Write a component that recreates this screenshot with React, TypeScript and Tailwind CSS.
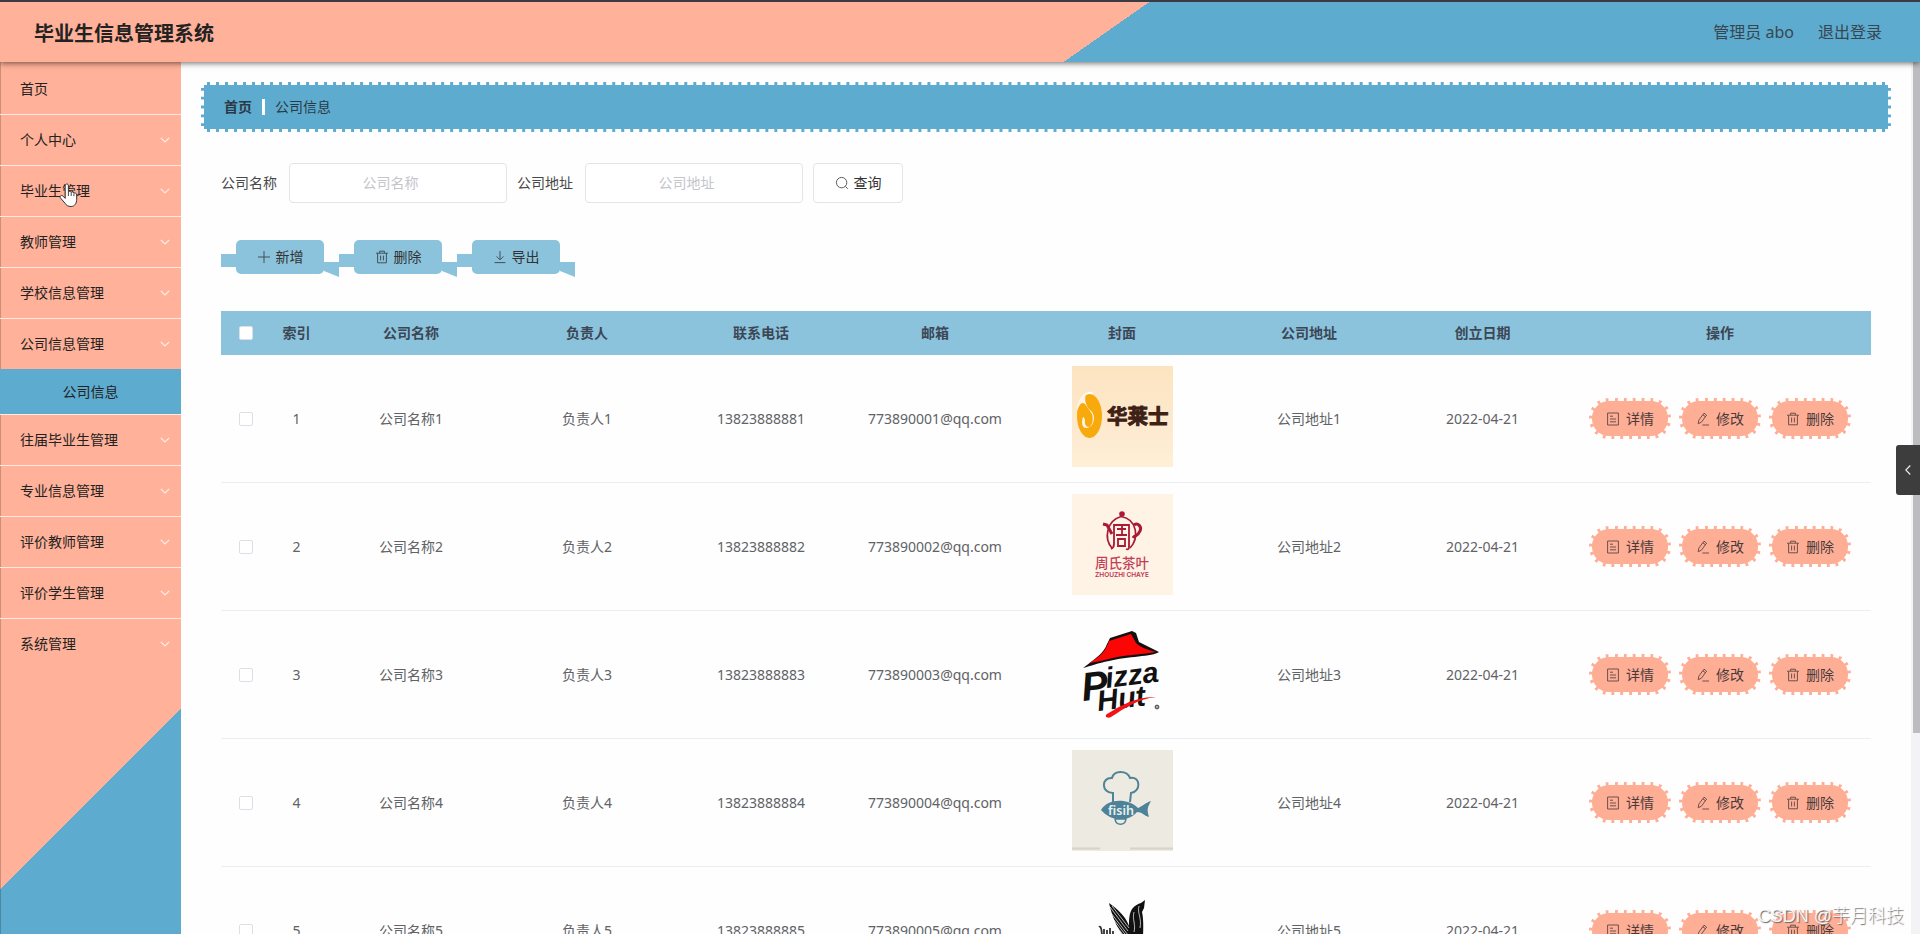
import React from "react";

type IconName = "plus" | "trash" | "download" | "search" | "doc" | "edit";

const iconPaths: Record<IconName, React.ReactNode> = {
  plus: <path d="M7 1v12M1 7h12" />,
  trash: <path d="M1 3.2h12M4.6 3V1.2h4.8V3M2.6 3.4v9.4h8.8V3.4M5.6 5.6v4.8M8.4 5.6v4.8" />,
  download: <path d="M7 1v8.6M3.6 6.4 7 9.8l3.4-3.4M1.6 12.6h10.8" />,
  search: (
    <>
      <circle cx="6.6" cy="6.6" r="5.2" />
      <path d="m10.4 10.4 2.4 2.4" />
    </>
  ),
  doc: <path d="M1.6 1h10.8v12H1.6zM4 4.2h3M4 7h6M4 9.8h6" />,
  edit: <path d="M6.4 13H13M2.2 11.8l.6-3.6L8 1.2l2.6 1.9-5.2 7.1zM6.8 2.8l2.6 1.9" />,
};

function Icon({ name }: { name: IconName }) {
  return (
    <svg viewBox="0 0 14 14" className="h-[14px] w-[14px] shrink-0" fill="none" stroke="currentColor" strokeWidth="1" opacity="0.8" aria-hidden="true">
      {iconPaths[name]}
    </svg>
  );
}

const menu: { label: string; child?: string; plain?: boolean }[] = [
  { label: "首页", plain: true },
  { label: "个人中心" },
  { label: "毕业生管理" },
  { label: "教师管理" },
  { label: "学校信息管理" },
  { label: "公司信息管理", child: "公司信息" },
  { label: "往届毕业生管理" },
  { label: "专业信息管理" },
  { label: "评价教师管理" },
  { label: "评价学生管理" },
  { label: "系统管理" },
];

function Sidebar() {
  return (
    <nav className="relative w-[181px] shrink-0 bg-[linear-gradient(135deg,#ffb199_78.6%,#5eabd0_78.6%)] pt-[2px] text-[14px] text-[#222] shadow-[inset_1px_0_0_rgba(0,0,0,0.2)]">
      <ul>
        {menu.map((item, i) => (
          <li key={item.label} className={i < menu.length - 1 ? "border-b border-[#ffe9e1]" : ""}>
            <button type="button" className="flex h-[50px] w-full items-center justify-between pl-5 pr-[11px]">
              <span>{item.label}</span>
              {!item.plain && (
                <svg viewBox="0 0 10 6" className="h-[6px] w-[10px]" fill="none" stroke="#ffeee8" strokeWidth="1.2" aria-hidden="true">
                  <path d="m.8.8 4.2 4.2L9.2.8" />
                </svg>
              )}
            </button>
            {item.child && (
              <a href="#company" className="flex h-[45px] items-center justify-center bg-[#5eabd0]">
                {item.child}
              </a>
            )}
          </li>
        ))}
      </ul>
      <svg viewBox="0 0 20 25" className="pointer-events-none absolute left-[59px] top-[121px] h-[25px] w-[20px]" aria-hidden="true">
        <path
          d="M6.2 2.8c0-2.4 3.2-2.4 3.2 0v6c.9-.8 2.4-.5 2.8.5.9-.7 2.3-.3 2.6.7 1.4-.5 2.9.3 2.9 1.9v4.3c0 4-2 7.3-5.6 7.3-3 0-4.700-1-6.100-3.300L1.300 14.800c-.9-1.800 1.200-3.200 2.700-1.700l2.200 2.300z"
          fill="#fff"
          stroke="#333"
          strokeWidth="1"
        />
        <path d="M9.400 9v4M12.200 9.600V13M14.900 10.400V13.200" stroke="#333" strokeWidth=".9" />
      </svg>
    </nav>
  );
}

function RibbonButton({ icon, label }: { icon: IconName; label: string }) {
  return (
    <div className="flex h-[37px] items-start">
      <span className="mt-[14px] h-[13px] w-[15px] bg-[#8bc3dd]" />
      <button type="button" className="flex h-[34px] w-[88px] items-center justify-center gap-[5px] rounded-[5px] bg-[#8bc3dd] text-[14px] text-[#333]">
        <Icon name={icon} />
        {label}
      </button>
      <span className="mt-[22px] h-[15px] w-[15px] bg-[#8bc3dd] [clip-path:polygon(0_0,100%_0,100%_100%,0_60%)]" />
    </div>
  );
}

function Field({ id, label }: { id: string; label: string }) {
  return (
    <div className="flex items-center">
      <label htmlFor={id} className="pr-3 text-[#484848]">
        {label}
      </label>
      <input
        id={id}
        placeholder={label}
        className="h-10 w-[218px] rounded-[4px] border border-[#e2e4e8] bg-white pb-[2px] pl-[15px] pr-[30px] text-center text-[14px] outline-none placeholder:text-[#c4c4cc]"
      />
    </div>
  );
}

function ActionButton({ icon, label }: { icon: IconName; label: string }) {
  return (
    <button
      type="button"
      className="flex h-[41px] w-[82px] items-center justify-center gap-[6px] rounded-[20px] border-[3px] border-dashed border-white bg-[#ffae96] text-[14px] text-[#4a3a3a]"
    >
      <Icon name={icon} />
      {label}
    </button>
  );
}

function Logo({ n }: { n: number }) {
  const cls = "mx-auto block h-[101px] w-[101px]";
  if (n === 1)
    return (
      <svg viewBox="0 0 101 101" className={cls} role="img" aria-label="华莱士">
        <defs>
          <linearGradient id="cream" x1="0" y1="0" x2="0" y2="1">
            <stop offset="0" stopColor="#fde4c0" />
            <stop offset="0.75" stopColor="#fdebd2" />
            <stop offset="1" stopColor="#fef0d6" />
          </linearGradient>
        </defs>
        <rect width="101" height="101" fill="url(#cream)" />
        <path d="M5 44C6 31 14 24 21 26L13 42Z" fill="#fff" />
        <ellipse cx="17.5" cy="50" rx="12.5" ry="22" fill="#f8a90c" />
        <path d="M5 45C6 34 10 29 14 28c-2 6 0 12 4 16 5 4 5 10 2 15-3 4-8 1-7-4 0-2-1-4-2-4-2 5-1 11 3 11 6 0 8-8 6-14l-7-10c-4-3-6 2-8 7z" fill="#fff4e6" />
        <text x="35" y="58" fontFamily="Noto Sans CJK SC, sans-serif" fontSize="20.500" fontWeight="700" fill="#3e2115" stroke="#3e2115" strokeWidth="1">
          华莱士
        </text>
      </svg>
    );
  if (n === 2)
    return (
      <svg viewBox="0 0 101 101" className={cls} role="img" aria-label="周氏茶叶">
        <rect width="101" height="101" fill="#fff3e6" />
        <g fill="none" stroke="#a81a35" strokeWidth="1.700">
          <path d="M40 54C32 45 34 27 49 22.500c17 3 18 22 9 31.500" />
          <path d="M31 30l4 1 5 9" strokeWidth="3" />
          <path d="M62 31c4-3 8 2 6 6-2 5-5 4-7 7" strokeWidth="3" />
          <path d="M42 30v20c0 3-1 4-3 5M42 31h15v22c0 2-1 3-3 2M45 35h9M50 31v10M44 41h11M46 45h7v7h-7z" strokeWidth="1.800" />
        </g>
        <circle cx="50" cy="20" r="2.800" fill="#a81a35" />
        <text x="50" y="74" textAnchor="middle" fontFamily="Noto Sans CJK SC, sans-serif" fontSize="13.500" fontWeight="500" fill="#c0405a">
          周氏茶叶
        </text>
        <text x="50" y="83" textAnchor="middle" fontFamily="Inter, sans-serif" fontSize="6.500" fontWeight="600" fill="#b83550">
          ZHOUZHI CHAYE
        </text>
      </svg>
    );
  if (n === 3)
    return (
      <svg viewBox="0 0 101 101" className={cls} role="img" aria-label="Pizza Hut">
        <path d="M11 46C23 37 32 31 35 22l3-6 22-7 4 2 3 9 20 10c-6 5-32 4-50 9-11 2-18 5-26 7z" fill="#111" />
        <path d="M17 41c11-6 17-12 20-22l22-7 5 9c5 5 13 7 20 9-10 2-34 3-47 7-8 2-14 3-20 4z" fill="#fb0505" />
        <g transform="rotate(-7 50 60)" fontFamily="Liberation Sans, sans-serif" fontStyle="italic" fontWeight="700" fill="#111">
          <text x="9" y="74" fontSize="40">P</text>
          <text x="34" y="64" fontSize="29">izza</text>
          <text x="23" y="86" fontSize="29">Hut</text>
        </g>
        <path d="M35 92c14-9 31-18 49-17-18 2-31 11-45 20-4 2-7-1-4-3z" fill="#f01414" />
        <circle cx="85" cy="85" r="1.900" fill="#aaa" stroke="#444" strokeWidth="1" />
      </svg>
    );
  if (n === 4)
    return (
      <svg viewBox="0 0 101 101" className={cls} role="img" aria-label="fisih">
        <rect width="101" height="101" fill="#edeae1" />
        <path d="M0 98.500h28M58 98.500h43" stroke="#d6d3ca" strokeWidth="2" />
        <path
          d="M41 52v-9c-12 0-12-16-1-15 2-8 15-8 18 0 11-2 11 14 1 15l-1 9"
          fill="none"
          stroke="#4f8497"
          strokeWidth="2"
        />
        <path d="M29 60c7-12 27-12 37-2 5-2 7-5 13-7-4 7-4 9-2 16-6-2-7-5-12-5-9 11-27 9-36-2z" fill="#4d8298" />
        <path d="M43 69c1 7 10 7 11 0z" fill="#edeae1" stroke="#4d8298" strokeWidth="1.500" />
        <text x="49" y="65" textAnchor="middle" fontFamily="Noto Sans, sans-serif" fontSize="12.500" fontWeight="600" fill="#e9f0ee">
          fisih
        </text>
      </svg>
    );
  return (
    <svg viewBox="0 0 101 101" className={cls} role="img" aria-label="天马">
      <path d="M37 25c8 6 16 12 20 23 0-6 0-12 3-17 3-4 6-5 9-6l4-3-1 8-2 4c2 8 1 20 1 28H56C47 55 41 42 37 25z" fill="#111" />
      <path d="M38 29l18 24M39 35l17 22M42 42l14 18M45 49l11 14M40 28l17 22M62 34c-2 8 2 12 0 20M67 28c-2 7 3 12 1 22" stroke="#fff" strokeWidth=".7" fill="none" />
      <path d="M27 49c2-2 3 4 3 11M32 51v9M35 52v8M38 50v11M41 53v7" stroke="#333" strokeWidth="1.800" fill="none" />
    </svg>
  );
}

const rows = [1, 2, 3, 4, 5];

const headings = ["索引", "公司名称", "负责人", "联系电话", "邮箱", "封面", "公司地址", "创立日期", "操作"];

function Checkbox({ label }: { label: string }) {
  return (
    <input
      type="checkbox"
      aria-label={label}
      className="mx-auto block h-[14px] w-[14px] appearance-none rounded-[2px] border border-[#dcdfe6] bg-white checked:bg-[#5eabd0]"
    />
  );
}

function CompanyTable() {
  return (
    <table className="mt-[34px] w-full table-fixed border-collapse text-center text-[14px] text-[#606266]">
      <colgroup>
        <col className="w-[50px]" />
        <col className="w-[51px]" />
        <col className="w-[178px]" />
        <col className="w-[174px]" />
        <col className="w-[174px]" />
        <col className="w-[174px]" />
        <col className="w-[200px]" />
        <col className="w-[174px]" />
        <col className="w-[173px]" />
        <col className="w-[302px]" />
      </colgroup>
      <thead>
        <tr className="h-[44px] bg-[#8bc3dd] text-[#3c4654]">
          <th>
            <Checkbox label="全选" />
          </th>
          {headings.map((h) => (
            <th key={h} className="font-bold">
              {h}
            </th>
          ))}
        </tr>
      </thead>
      <tbody>
        {rows.map((n) => (
          <tr key={n} className="border-b border-[#ebeef5]">
            <td>
              <Checkbox label={"选择公司" + n} />
            </td>
            <td>{n}</td>
            <td>公司名称{n}</td>
            <td>负责人{n}</td>
            <td>1382388888{n}</td>
            <td>77389000{n}@qq.com</td>
            <td className="pb-[15px] pt-[11px]">
              <Logo n={n} />
            </td>
            <td>公司地址{n}</td>
            <td>2022-04-21</td>
            <td>
              <div className="flex justify-center gap-2">
                <ActionButton icon="doc" label="详情" />
                <ActionButton icon="edit" label="修改" />
                <ActionButton icon="trash" label="删除" />
              </div>
            </td>
          </tr>
        ))}
      </tbody>
    </table>
  );
}

export default function App() {
  return (
    <div className="relative flex h-screen flex-col overflow-hidden bg-[#fefefe] font-['Noto_Sans','Noto_Sans_CJK_SC',sans-serif] leading-5">
      <header className="relative z-10 flex h-[62px] shrink-0 items-center justify-between border-t-2 border-[#3c3a42] bg-[linear-gradient(145deg,#ffb199_57.3%,#5eabd0_57.3%)] pl-[34px] pr-[38px] shadow-[0_1px_6px_rgba(0,0,0,0.6)]">
        <h1 className="pt-[3px] text-[20px] font-bold text-[#222]">毕业生信息管理系统</h1>
        <div className="flex gap-6 text-[16px] text-[#37474f]">
          <span>管理员 abo</span>
          <a href="#logout">退出登录</a>
        </div>
      </header>

      <div className="flex min-h-0 flex-1">
        <Sidebar />
        <main className="min-w-0 flex-1 overflow-hidden px-5 pt-5 text-[14px]">
          <nav className="flex h-[50px] items-center border-[3px] border-dashed border-white bg-[#5eabd0] px-5 text-[#2a3a44]">
            <a href="#home" className="font-bold">
              首页
            </a>
            <span className="mx-[10px] h-4 w-[3px] bg-white" />
            <span>公司信息</span>
          </nav>

          <div className="px-5 pt-[31px]">
            <form className="flex items-center gap-[10px]">
              <Field id="company-name" label="公司名称" />
              <Field id="company-address" label="公司地址" />
              <button type="button" className="flex h-10 w-[90px] items-center justify-center gap-[5px] rounded-[4px] border border-[#e2e4e8] bg-white text-[#333]">
                <Icon name="search" />
                查询
              </button>
            </form>

            <div className="mt-[37px] flex">
              <RibbonButton icon="plus" label="新增" />
              <RibbonButton icon="trash" label="删除" />
              <RibbonButton icon="download" label="导出" />
            </div>

            <CompanyTable />
          </div>
        </main>
        <div className="w-[9px] shrink-0 bg-[#f3f3f5] pl-[2px]">
          <div className="h-[77%] bg-[#bdbdbf]" />
        </div>
      </div>

      <button type="button" aria-label="展开" className="absolute right-0 top-[445px] z-20 flex h-[50px] w-6 items-center justify-center rounded-l-[3px] bg-[#3d3d3d]">
        <svg viewBox="0 0 6 10" className="h-[10px] w-[6px]" fill="none" stroke="#eee" strokeWidth="1.100" aria-hidden="true">
          <path d="M5.300.5.800 5l4.500 4.500" />
        </svg>
      </button>
      <div className="pointer-events-none absolute bottom-2 right-4 z-20 font-['Liberation_Sans','Noto_Sans_CJK_SC',sans-serif] text-[18px] font-light text-white/90 [text-shadow:1px_1px_1px_#666]">
        CSDN @芋月科技
      </div>
    </div>
  );
}
